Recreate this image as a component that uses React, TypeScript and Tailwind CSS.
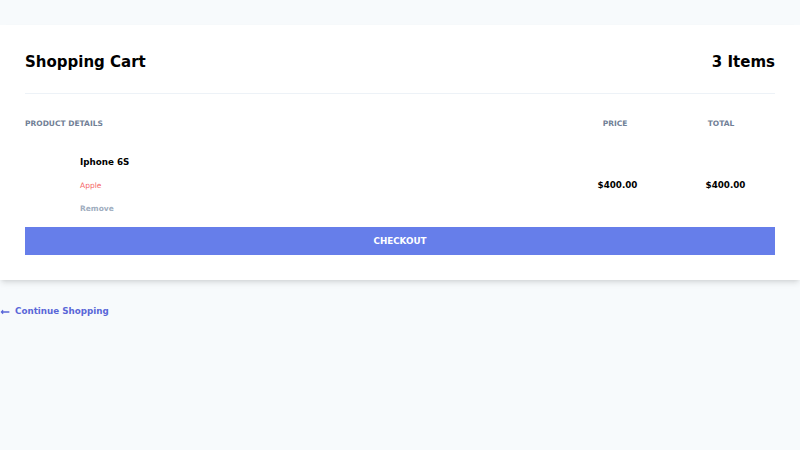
import React from 'react';

const font = { fontFamily: '"DejaVu Sans", Verdana, sans-serif' };

function BackArrow() {
  return (
    <svg viewBox="0 0 448 512" className="w-[10px] h-[10px] mr-[5px] fill-current">
      <path d="M134.059 296H436c6.627 0 12-5.373 12-12v-56c0-6.627-5.373-12-12-12H134.059v-46.059c0-21.382-25.851-32.09-40.971-16.971L7.029 239.029c-9.373 9.373-9.373 24.569 0 33.941l86.059 86.059c15.119 15.119 40.971 4.411 40.971-16.971V296z" />
    </svg>
  );
}

export default function App() {
  return (
    <div className="min-h-screen bg-[#f7fafc] pt-[25px]" style={font}>
      {/* Cart card */}
      <div className="bg-white px-[25px] pt-[26px] pb-[25px] shadow-md">
        <div className="flex justify-between border-b border-[#edf2f7] pb-[20px]">
          <h1 className="text-[15px] leading-[22px] font-bold text-black">Shopping Cart</h1>
          <h2 className="text-[15px] leading-[22px] font-bold text-black">3 Items</h2>
        </div>

        <div className="flex mt-[25px] mb-[12px]">
          <h3 className="flex-1 text-[7.5px] leading-[10px] font-bold uppercase text-[#718096]">Product Details</h3>
          <h3 className="w-[100px] mr-[6px] text-center text-[7.5px] leading-[10px] font-bold uppercase text-[#718096]">Price</h3>
          <h3 className="w-[100px] mr-[4px] text-center text-[7.5px] leading-[10px] font-bold uppercase text-[#718096]">Total</h3>
        </div>

        <div className="flex items-center pt-[15px] pb-[13px]">
          <div className="flex flex-1">
            <div className="w-[55px] h-[58px]" />
            <div className="flex flex-col justify-between h-[58px]">
              <span className="text-[8.75px] leading-[12.5px] font-bold text-black">Iphone 6S</span>
              <span className="text-[7.5px] leading-[10px] text-[#f56565]">Apple</span>
              <a href="#" className="text-[7.5px] leading-[10px] font-bold text-[#a0aec0]">Remove</a>
            </div>
          </div>
          <span className="w-[100px] mr-[6px] pl-[5px] pt-[2px] text-center text-[8.75px] font-bold text-black">$400.00</span>
          <span className="w-[100px] mr-[4px] pl-[9px] pt-[2px] text-center text-[8.75px] font-bold text-black">$400.00</span>
        </div>

        <button className="w-full h-[28px] bg-[#667eea] text-[8.75px] leading-[12.5px] font-bold uppercase text-white">
          Checkout
        </button>
      </div>

      <a href="#" className="flex items-center mt-[25px] text-[8.75px] leading-[12.5px] font-bold text-[#5a67d8]">
        <BackArrow />
        Continue Shopping
      </a>
    </div>
  );
}
